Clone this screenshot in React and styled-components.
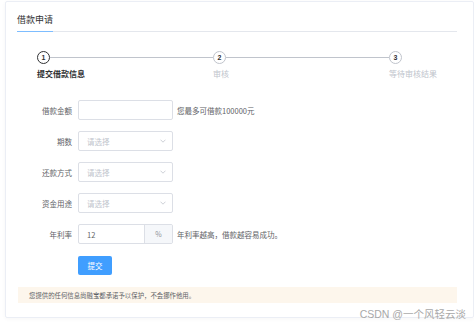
import React from "react";
import styled, { createGlobalStyle } from "styled-components";

const Global = createGlobalStyle`
  html, body { margin: 0; padding: 0; background: #fff; }
  body { font-family: "Noto Sans CJK SC", "Noto Sans", sans-serif; color: #606266; }
  * { box-sizing: border-box; }
`;

const Page = styled.div`
  position: relative;
  width: 474px;
  height: 323px;
  overflow: hidden;
  padding: 1px 0 0 5px;
`;

const Card = styled.div`
  width: 469px;
  height: 317px;
  border: 1px solid #ebeef5;
  border-radius: 2px;
  padding: 0 16px 0 11px;
  box-shadow: 0 1px 4px rgba(0, 0, 0, 0.04);
`;

const TabBar = styled.div`
  display: flex;
  border-bottom: 1px solid #e4e7ed;
`;

const Tab = styled.div`
  padding: 12px 0 5px;
  font-size: 9px;
  line-height: 12px;
  color: #303133;
  width: 36px;
  border-bottom: 1px solid #7dbdff;
  margin-bottom: -1px;
`;

const Steps = styled.div`
  display: flex;
  padding: 19px 0 0 20px;
`;

const Step = styled.div`
  display: flex;
  flex-direction: column;
  width: ${(p) => (p.$last ? "auto" : "176px")};
`;

const StepHead = styled.div`
  display: flex;
  align-items: center;
  height: 13px;
`;

const Circle = styled.div`
  width: 13px;
  height: 13px;
  border-radius: 50%;
  border: 1px solid ${(p) => (p.$active ? "#303133" : "#c0c4cc")};
  display: flex;
  align-items: center;
  justify-content: center;
  font-size: 7px;
  font-weight: 700;
  color: #303133;
  font-family: "Liberation Sans", sans-serif;
  flex-shrink: 0;
`;

const Line = styled.div`
  flex: 1;
  height: 1px;
  background: #c0c4cc;
`;

const StepTitle = styled.div`
  margin-top: 5px;
  font-size: 8px;
  line-height: 10px;
  white-space: nowrap;
  color: ${(p) => (p.$active ? "#303133" : "#c0c4cc")};
  font-weight: ${(p) => (p.$active ? 700 : 400)};
`;

const Form = styled.div`
  display: flex;
  flex-direction: column;
  gap: 11px;
  margin-top: 21px;
`;

const Row = styled.div`
  display: flex;
  align-items: center;
  height: 20px;
`;

const Label = styled.div`
  width: 61px;
  padding-right: 6px;
  text-align: right;
  font-size: 7.5px;
  color: #606266;
`;

const Input = styled.div`
  width: 95px;
  height: 20px;
  border: 1px solid #dcdfe6;
  border-radius: 2px;
  display: flex;
  align-items: center;
  padding: 0 6px 0 8px;
  font-size: 7.5px;
  color: ${(p) => (p.$placeholder ? "#c0c4cc" : "#606266")};
  justify-content: space-between;
`;

const Group = styled.div`
  display: flex;
  width: 95px;
  height: 20px;
  border: 1px solid #dcdfe6;
  border-radius: 2px;
  overflow: hidden;
`;

const GroupInput = styled.div`
  flex: 1;
  display: flex;
  align-items: center;
  padding-left: 8px;
  font-size: 7.5px;
  color: #606266;
`;

const Append = styled.div`
  width: 28px;
  background: #f5f7fa;
  border-left: 1px solid #dcdfe6;
  display: flex;
  align-items: center;
  justify-content: center;
  font-size: 7px;
  color: #909399;
`;

const Hint = styled.div`
  margin-left: 4px;
  font-size: 7.5px;
  color: #606266;
`;

const Button = styled.div`
  margin-left: 61px;
  width: 34px;
  height: 19px;
  background: #409eff;
  border-radius: 2px;
  color: #fff;
  font-size: 7.5px;
  display: flex;
  align-items: center;
  justify-content: center;
`;

const Notice = styled.div`
  margin: 12px 0 0 1px;
  height: 16px;
  background: #fdf6ec;
  display: flex;
  align-items: center;
  padding-left: 11px;
  font-size: 6.4px;
  color: #606266;
`;

const Watermark = styled.div`
  position: absolute;
  right: 8px;
  bottom: 2px;
  font-size: 10.5px;
  color: #a8a8a8;
  font-family: "Liberation Sans", "Noto Sans CJK SC", sans-serif;
`;

const Chevron = () => (
  <svg width="6" height="4" viewBox="0 0 6 4" fill="none">
    <path d="M0.5 0.7 L3 3.2 L5.5 0.7" stroke="#c0c4cc" strokeWidth="0.8" />
  </svg>
);

const Select = () => (
  <Input $placeholder>
    <span>请选择</span>
    <Chevron />
  </Input>
);

export default function App() {
  return (
    <Page>
      <Global />
      <Card>
        <TabBar>
          <Tab>借款申请</Tab>
        </TabBar>
        <Steps>
          <Step>
            <StepHead>
              <Circle $active>1</Circle>
              <Line />
            </StepHead>
            <StepTitle $active>提交借款信息</StepTitle>
          </Step>
          <Step>
            <StepHead>
              <Circle>2</Circle>
              <Line />
            </StepHead>
            <StepTitle>审核</StepTitle>
          </Step>
          <Step $last>
            <StepHead>
              <Circle>3</Circle>
            </StepHead>
            <StepTitle>等待审核结果</StepTitle>
          </Step>
        </Steps>
        <Form>
          <Row>
            <Label>借款金额</Label>
            <Input />
            <Hint>您最多可借款100000元</Hint>
          </Row>
          <Row>
            <Label>期数</Label>
            <Select />
          </Row>
          <Row>
            <Label>还款方式</Label>
            <Select />
          </Row>
          <Row>
            <Label>资金用途</Label>
            <Select />
          </Row>
          <Row>
            <Label>年利率</Label>
            <Group>
              <GroupInput>12</GroupInput>
              <Append>%</Append>
            </Group>
            <Hint>年利率越高，借款越容易成功。</Hint>
          </Row>
          <Row>
            <Button>提交</Button>
          </Row>
        </Form>
        <Notice>您提供的任何信息尚融宝都承诺予以保护，不会挪作他用。</Notice>
      </Card>
      <Watermark>CSDN @一个风轻云淡</Watermark>
    </Page>
  );
}
